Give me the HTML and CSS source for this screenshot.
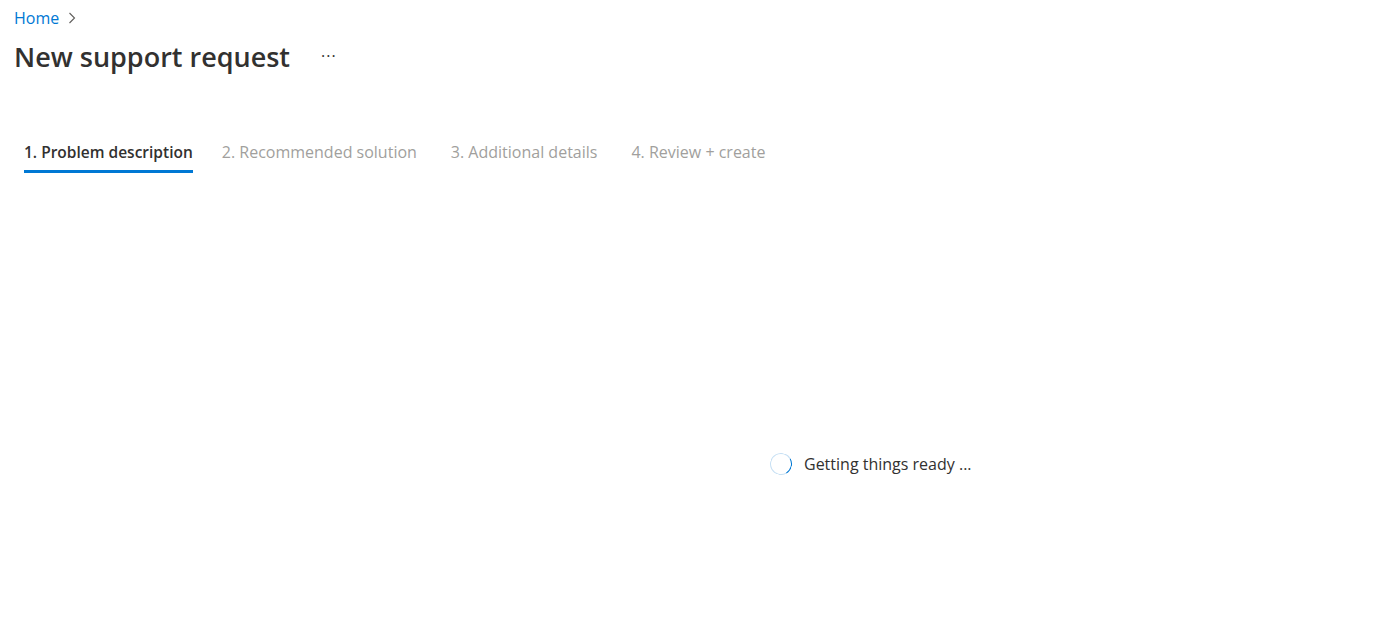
FILE: index.html
```html
<!doctype html>
<html lang="en">
	<head>
		<title>New support request</title>
		<link rel="stylesheet" href="styles.css">
	</head>
	<body>
		<div class="blade">
			<nav class="crumbs">
				<a href="#">Home</a>
				<svg class="chev" width="8" height="12" viewBox="0 0 8 12"><path d="M1.5 1 L6.5 6 L1.5 11" fill="none" stroke="#605e5c" stroke-width="1.1"/></svg>
			</nav>
			<div class="head">
				<h1>New support request</h1>
				<span class="more">&middot;&middot;&middot;</span>
			</div>

			<ul class="tabs">
				<li class="active">1. Problem description</li>
				<li>2. Recommended solution</li>
				<li>3. Additional details</li>
				<li>4. Review + create</li>
			</ul>

			<div class="loading">
				<span class="spinner"></span>
				<span>Getting things ready ...</span>
			</div>
		</div>
	</body>
</html>
```

FILE: styles.css
```css
body {
	margin: 0;
	font-family: "Segoe UI", "Open Sans", sans-serif;
	color: #323130;
	background: #fff;
}

.blade {
	padding: 0 14px;
}

.crumbs {
	display: flex;
	align-items: center;
	gap: 9px;
	height: 36px;
	font-size: 16px;
}

.crumbs a {
	color: #0078d4;
	text-decoration: none;
}

.head {
	display: flex;
	align-items: center;
	gap: 31px;
	height: 40px;
}

h1 {
	margin: 0;
	font-size: 27px;
	font-weight: 600;
}

.more {
	font-size: 16px;
	letter-spacing: 1px;
	color: #323130;
}

.tabs {
	display: flex;
	margin: 61px 0 0 10px;
	padding: 0;
	list-style: none;
	font-size: 16px;
	color: #a19f9d;
}

.tabs li {
	padding: 4px 0 7px;
	margin-right: 34px;
	border-bottom: 3px solid transparent;
}

.tabs li.active {
	color: #323130;
	font-size: 15.5px;
	font-weight: 600;
	margin-right: 29px;
	border-bottom-color: #0078d4;
}

.loading {
	display: flex;
	align-items: center;
	gap: 12px;
	margin: 280px 0 0 756px;
	font-size: 16px;
}

.spinner {
	box-sizing: border-box;
	width: 22px;
	height: 22px;
	border-radius: 50%;
	border: 1.5px solid #c7e0f4;
	border-right-color: #0078d4;
	transform: rotate(15deg);
}
```
